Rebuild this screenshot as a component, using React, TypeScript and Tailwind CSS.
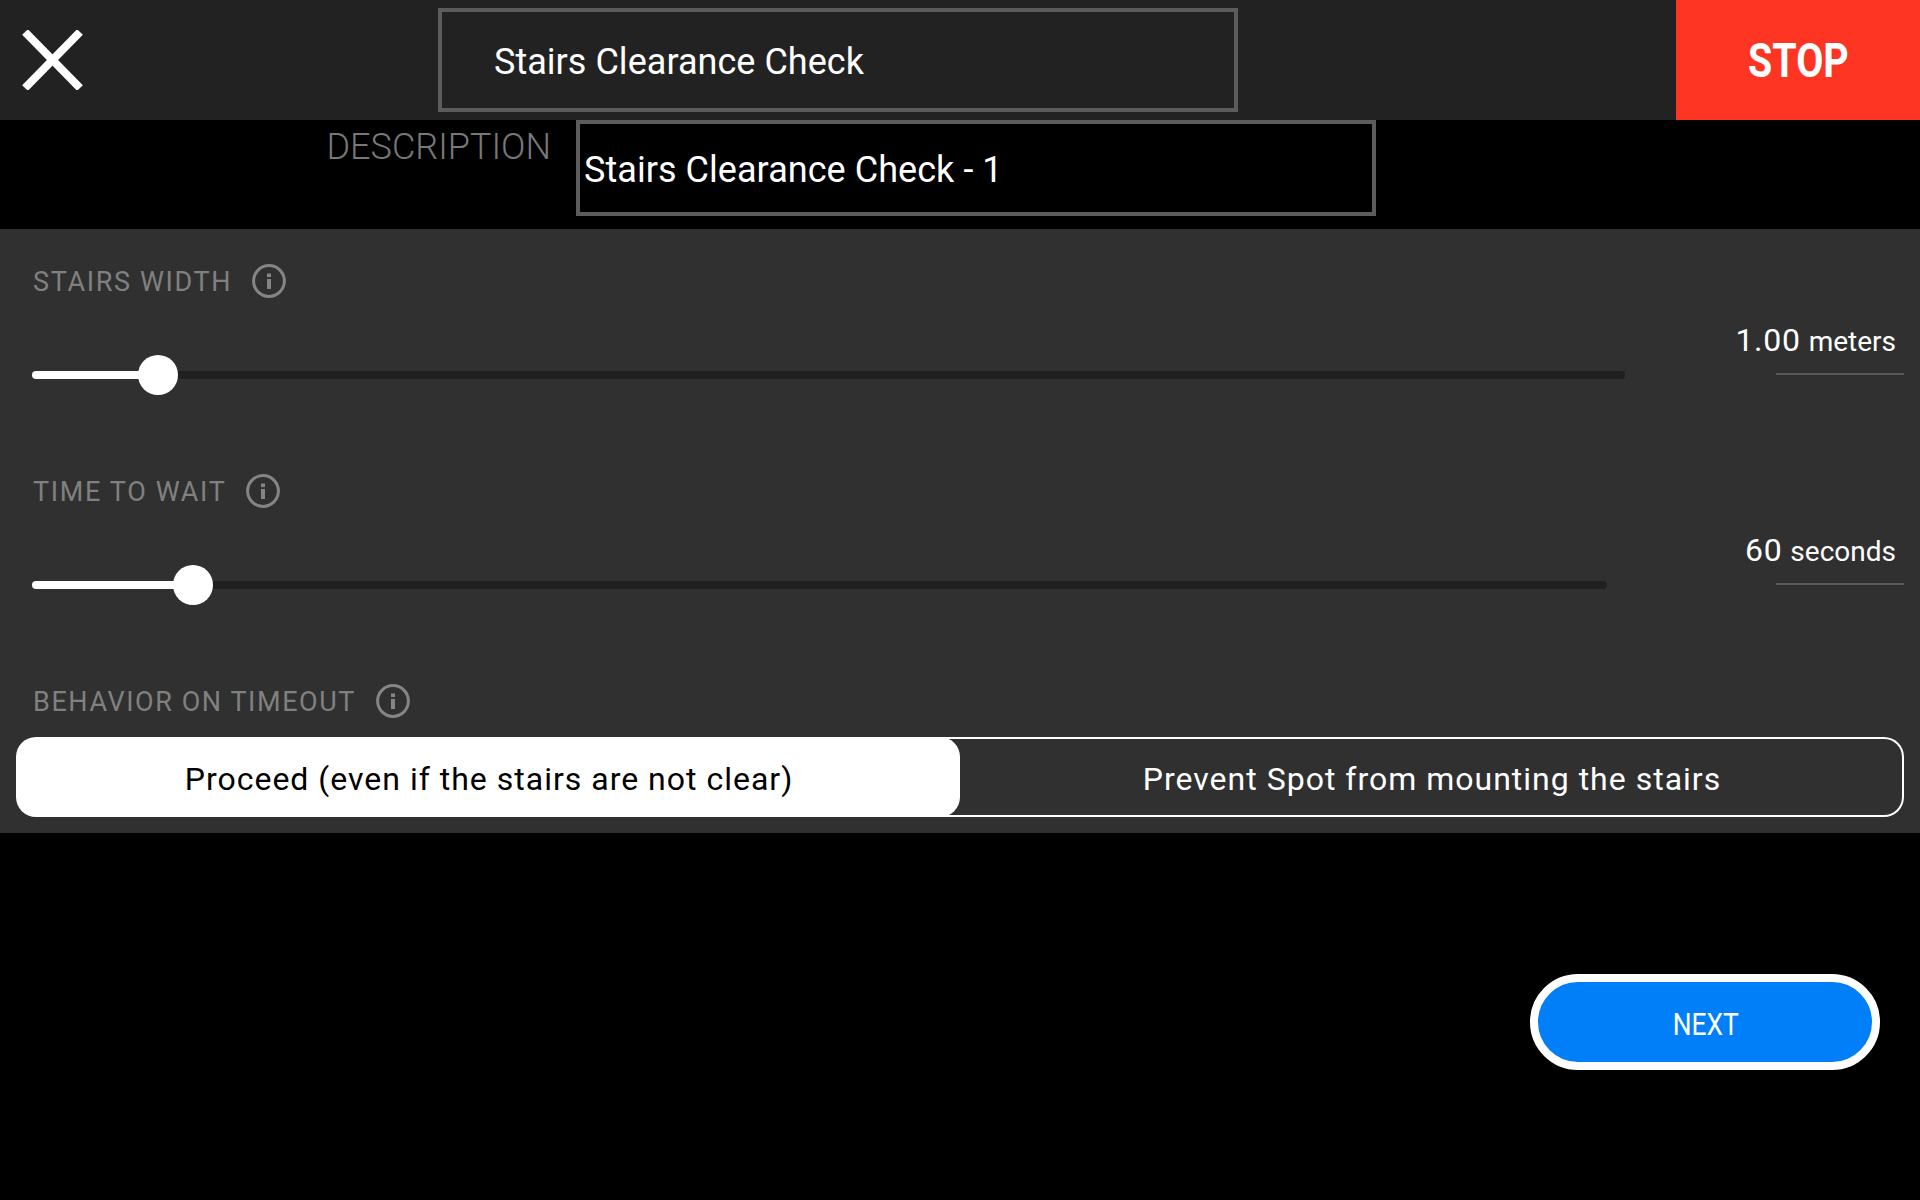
const FONT = "font-['Roboto','Noto_Sans',sans-serif]";

const InfoIcon = () => (
  <svg width="34" height="34" viewBox="0 0 34 34" fill="none" className="shrink-0">
    <circle cx="17" cy="17" r="15.4" stroke="#858585" strokeWidth="3" />
    <rect x="15" y="15" width="4" height="10" fill="#858585" />
    <rect x="15" y="9.5" width="4" height="3.6" fill="#858585" />
  </svg>
);

const CloseIcon = () => (
  <svg width="61" height="60" viewBox="0 0 61 60" fill="none">
    <path d="M3 2 L58 58 M58 2 L3 58" stroke="#fff" strokeWidth="8" />
  </svg>
);

type SliderRowProps = {
  label: string;
  trackWidth: string;
  fillWidth: string;
  thumbLeft: string;
  value: string;
  unit: string;
};

const SliderRow = ({ label, trackWidth, fillWidth, thumbLeft, value, unit }: SliderRowProps) => (
  <div className="h-[210px] pl-[33px] pt-[35px]">
    <div className="flex h-[34px] items-center gap-[20px]">
      <span className="pt-[2px] text-[27px] leading-none tracking-[1.65px] text-[#808080]">{label}</span>
      <InfoIcon />
    </div>
    <div className="mt-[22px] flex">
      <div className={`relative -ml-px mt-[51px] h-[8px] rounded-full bg-[#202020] ${trackWidth}`}>
        <div className={`absolute left-0 top-0 h-[8px] rounded-full bg-white ${fillWidth}`} />
        <div className={`absolute top-[-16px] h-[40px] w-[40px] rounded-full bg-white ${thumbLeft}`} />
      </div>
    </div>
    <div className="-mt-[59px] ml-[1743px] flex h-[55px] w-[128px] items-start justify-end whitespace-nowrap border-b-2 border-[#595959] pr-[8px] pt-[2px] text-white">
      <span className="text-[32px] leading-[36px] tracking-[0.7px]">{value}</span>
      <span className="ml-[8px] mt-[2px] text-[28px] leading-[36px]">{unit}</span>
    </div>
  </div>
);

export default function App() {
  return (
    <div className={`h-[1200px] w-[1920px] overflow-hidden bg-black ${FONT}`}>
      <header className="flex h-[120px] bg-[#222222]">
        <div className="flex w-[438px] items-center pl-[22px]">
          <CloseIcon />
        </div>
        <div className="mt-[8px] flex h-[104px] w-[800px] items-center border-[4px] border-[#5c5c5c] pl-[52px] pt-[4px] text-[36px] tracking-[0.03px] text-white">
          Stairs Clearance Check
        </div>
        <button className="ml-auto flex h-[120px] w-[244px] items-center justify-center bg-[#ff3524] pt-[2px] text-[48px] font-bold text-white">
          <span className="inline-block scale-x-[0.82]">STOP</span>
        </button>
      </header>

      <div className="flex h-[109px]">
        <div className="w-[551px] pt-[5px] text-right text-[36px] font-light leading-[44px] text-[#787878]">
          DESCRIPTION
        </div>
        <div className="ml-[25px] flex h-[96px] w-[800px] items-center border-[4px] border-[#5c5c5c] pl-[4px] pt-[4px] text-[36px] tracking-[0.05px] text-white">
          Stairs Clearance Check - 1
        </div>
      </div>

      <section className="h-[604px] bg-[#303030]">
        <SliderRow
          label="STAIRS WIDTH"
          trackWidth="w-[1593px]"
          fillWidth="w-[110px]"
          thumbLeft="left-[106px]"
          value="1.00"
          unit="meters"
        />
        <SliderRow
          label="TIME TO WAIT"
          trackWidth="w-[1575px]"
          fillWidth="w-[145px]"
          thumbLeft="left-[141px]"
          value="60"
          unit="seconds"
        />
        <div className="pl-[33px] pt-[35px]">
          <div className="flex h-[34px] items-center gap-[20px]">
            <span className="pt-[2px] text-[27px] leading-none tracking-[1.57px] text-[#808080]">BEHAVIOR ON TIMEOUT</span>
            <InfoIcon />
          </div>
        </div>
        <div className="ml-[16px] mt-[19px] flex h-[80px] w-[1888px] text-[32px] tracking-[1px]">
          <div className="z-10 flex h-[80px] w-[944px] items-center justify-center rounded-[20px] bg-white pl-[2px] pt-[3px] text-black">
            Proceed (even if the stairs are not clear)
          </div>
          <div className="-ml-[20px] flex h-[80px] flex-1 items-center justify-center rounded-r-[20px] border-2 border-l-0 border-white pl-[22px] pt-[3px] text-white">
            Prevent Spot from mounting the stairs
          </div>
        </div>
      </section>

      <div className="flex justify-end pr-[40px] pt-[141px]">
        <button className="flex h-[96px] w-[350px] items-center justify-center rounded-full border-[8px] border-white bg-[#007ff9] pl-[1px] pt-[6px] text-[31px] text-white">
          <span className="inline-block scale-x-[0.85]">NEXT</span>
        </button>
      </div>
    </div>
  );
}
